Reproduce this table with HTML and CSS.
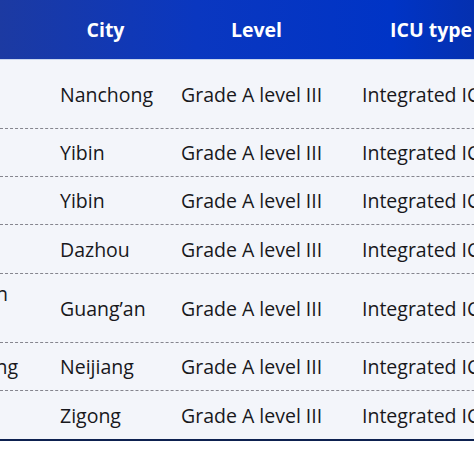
FILE: index.html
```html
<!DOCTYPE html>
<html>
<head>
<meta charset="utf-8">
<link rel="stylesheet" href="styles.css">
</head>
<body>
<div class="viewport">
  <div class="table">
    <div class="row head">
      <div class="cell c1"></div>
      <div class="cell c2">City</div>
      <div class="cell c3">Level</div>
      <div class="cell c4">ICU type</div>
    </div>
    <div class="row tall">
      <div class="cell c1"></div>
      <div class="cell c2">Nanchong</div>
      <div class="cell c3">Grade A level III</div>
      <div class="cell c4">Integrated ICU</div>
    </div>
    <div class="row">
      <div class="cell c1"></div>
      <div class="cell c2">Yibin</div>
      <div class="cell c3">Grade A level III</div>
      <div class="cell c4">Integrated ICU</div>
    </div>
    <div class="row">
      <div class="cell c1"></div>
      <div class="cell c2">Yibin</div>
      <div class="cell c3">Grade A level III</div>
      <div class="cell c4">Integrated ICU</div>
    </div>
    <div class="row mid">
      <div class="cell c1"></div>
      <div class="cell c2">Dazhou</div>
      <div class="cell c3">Grade A level III</div>
      <div class="cell c4">Integrated ICU</div>
    </div>
    <div class="row tall">
      <div class="cell c1 top"><span class="frag end-a">Guang'an</span></div>
      <div class="cell c2">Guang’an</div>
      <div class="cell c3">Grade A level III</div>
      <div class="cell c4">Integrated ICU</div>
    </div>
    <div class="row">
      <div class="cell c1"><span class="frag end-b">Neijiang</span></div>
      <div class="cell c2">Neijiang</div>
      <div class="cell c3">Grade A level III</div>
      <div class="cell c4">Integrated ICU</div>
    </div>
    <div class="row mid last">
      <div class="cell c1"></div>
      <div class="cell c2">Zigong</div>
      <div class="cell c3">Grade A level III</div>
      <div class="cell c4">Integrated ICU</div>
    </div>
  </div>
</div>
</body>
</html>
```
FILE: styles.css
```css
html, body {
  margin: 0;
  padding: 0;
  background: #ffffff;
  overflow: hidden;
}
.viewport {
  width: 474px;
  height: 474px;
  overflow: hidden;
  font-family: "Open Sans", "Noto Sans", sans-serif;
  font-size: 19.5px;
  color: #18181c;
}
.table {
  width: 560px;
  background: #f3f5fa;
  border-bottom: 2px solid #0d2150;
}
.row {
  display: grid;
  grid-template-columns: 45px 121px 181px 213px;
  height: 47px;
  border-bottom: 1px dashed #85858e;
}
.row.tall { height: 68px; }
.row.mid { height: 48px; }
.row.last { border-bottom: none; }
.row.head {
  height: 59px;
  border-bottom: 1px solid #c9d6ee;
  background: linear-gradient(90deg, #1c3aa2 0%, #0a37c0 35%, #0034c6 70%, #0a2c98 100%);
  color: #ffffff;
  font-weight: 700;
}
.cell {
  display: flex;
  align-items: center;
  padding-left: 15px;
  white-space: nowrap;
  overflow: hidden;
}
.head .cell {
  justify-content: center;
  padding-left: 0;
}
.head .c4 {
  justify-content: flex-start;
  padding-left: 43px;
}
.c1 {
  padding-left: 0;
  justify-content: flex-end;
}
.c1.top { align-items: flex-start; padding-top: 6px; }
.frag.end-a { margin-right: 37px; }
.frag.end-b { margin-right: 27px; }
```
